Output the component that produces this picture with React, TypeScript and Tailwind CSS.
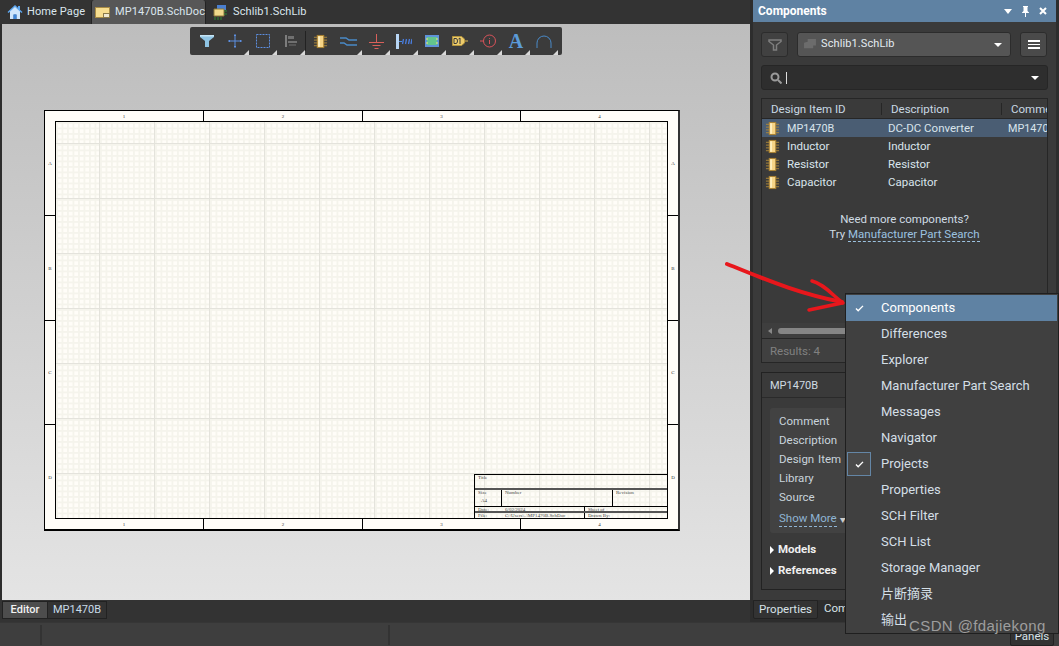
const font = "font-['Roboto','Noto_Sans_CJK_SC',sans-serif]";

function Chip({ s = 16 }: { s?: number }) {
  return (
    <svg width={s} height={s} viewBox="0 0 16 16" className="shrink-0">
      <g stroke="#b08a3a" strokeWidth="1">
        {[3.5, 6.5, 9.5, 12.5].map((y) => (
          <path key={y} d={`M1 ${y}H15`} />
        ))}
      </g>
      <rect x="4.5" y="1.5" width="7" height="13" fill="#f6d486" stroke="#a87f2e" />
      <rect x="5.5" y="2.5" width="2" height="11" fill="#fdeebf" />
    </svg>
  );
}

function Corner() {
  return <span className="absolute right-0 bottom-0 w-0 h-0 border-l-[5px] border-l-transparent border-b-[5px] border-b-[#d8d8d8]" />;
}

function ToolBtn({ children, corner = true }: { children: React.ReactNode; corner?: boolean }) {
  return (
    <div className="relative w-[28px] h-[28px] flex items-center justify-center shrink-0">
      {children}
      {corner && <Corner />}
    </div>
  );
}

function Toolbar() {
  return (
    <div className="flex items-center w-[372px] h-[28px] bg-[#3b3b3b] rounded-[2px] pl-[3px] shrink-0">
      <ToolBtn corner={false}>
        <svg width="14" height="12" viewBox="0 0 14 12"><path d="M0 0h14v2L9 6v6H5V6L0 2z" fill="#8fc4e4" /><path d="M0 0h14v1.500H0z" fill="#c5e4f5" /></svg>
      </ToolBtn>
      <ToolBtn>
        <svg width="14" height="14" viewBox="0 0 14 14" stroke="#5d8fe0" fill="none"><path d="M7 0v14M0 7h14M6 1.500h2M6 12.500h2M1.500 6v2M12.500 6v2" /></svg>
      </ToolBtn>
      <ToolBtn>
        <svg width="14" height="14" viewBox="0 0 14 14"><rect x="0.500" y="0.500" width="13" height="13" fill="none" stroke="#5d8fe0" strokeDasharray="2 1" /></svg>
      </ToolBtn>
      <ToolBtn>
        <svg width="12" height="12" viewBox="0 0 12 12"><path d="M0 0h2v12H0z" fill="#7d7d7d" /><path d="M3 1h6v3H3zM3 6h9v2H3z" fill="#707070" /><path d="M4 10h7" stroke="#707070" /></svg>
      </ToolBtn>
      <div className="w-px h-[20px] bg-[#222] shrink-0" />
      <ToolBtn corner={false}><Chip s={15} /></ToolBtn>
      <ToolBtn>
        <svg width="17" height="10" viewBox="0 0 17 10" fill="none" stroke="#4a8ac8" strokeWidth="1.500"><path d="M0 2h6l3 2h8M0 7h4l3 2h10" /></svg>
      </ToolBtn>
      <ToolBtn>
        <svg width="15" height="15" viewBox="0 0 15 15" stroke="#d8605a" fill="none"><path d="M7.500 0v8M0 8.500h15M3.500 11.500h8M5.500 14.500h4" /></svg>
      </ToolBtn>
      <ToolBtn>
        <svg width="16" height="15" viewBox="0 0 16 15"><rect x="0" y="0" width="3" height="15" fill="#b8d6f5" /><path d="M3 7.500h3" stroke="#4a8ae0" /><path d="M7.500 5l-1 5M10.500 5l-1 5M13.500 5l-1 5M16 5l-1 5" stroke="#4a7ee0" strokeWidth="1.300" fill="none" /></svg>
      </ToolBtn>
      <ToolBtn>
        <svg width="14" height="12" viewBox="0 0 14 12"><rect x="0" y="0" width="14" height="12" fill="#5f93d8" /><rect x="2" y="2" width="10" height="8" fill="#63c48e" /><path d="M1 4h2M1 8h2M11 4h2M11 8h2" stroke="#f4ea78" /></svg>
      </ToolBtn>
      <ToolBtn>
        <svg width="16" height="10" viewBox="0 0 16 10"><path d="M0.500 0.500h9l3 2.500v4l-3 2.500h-9z" fill="#eccb6b" stroke="#b4943c" /><path d="M12.500 5H16" stroke="#d8b552" /><path d="M2 2.500h2a1.500 2.500 0 0 1 0 5H2zM6.500 3 8 2v6" fill="none" stroke="#3b3b3b" /></svg>
      </ToolBtn>
      <ToolBtn>
        <svg width="16" height="14" viewBox="0 0 16 14" stroke="#d9535a" fill="none"><circle cx="9.500" cy="7" r="6" /><path d="M0 7h3.500M9.500 4v.800M9.500 6v4" /></svg>
      </ToolBtn>
      <ToolBtn>
        <span className="text-[#5b9bd8] text-[20px] leading-none font-['Liberation_Serif',serif] font-bold">A</span>
      </ToolBtn>
      <ToolBtn>
        <svg width="16" height="13" viewBox="0 0 16 13" fill="none" stroke="#4a8ac8"><path d="M1 13V8a7 7 0 0 1 14 0v5" /></svg>
      </ToolBtn>
    </div>
  );
}

function Ruler() {
  return (
    <div className="col-span-3 grid grid-cols-[159px_159px_158px_1fr] h-[10px]">
      {["1", "2", "3", "4"].map((n, i) => (
        <div key={n} className={`flex items-center justify-center text-[5px] leading-none text-[#333] font-['Liberation_Serif',serif] ${i < 3 ? "border-r border-r-black" : ""}`}>{n}</div>
      ))}
    </div>
  );
}

function Side() {
  const extra = ["pb-[10px]", "", "", "pt-[10px]"];
  return (
    <div className="grid grid-rows-[95px_105px_104px_1fr] h-full">
      {["A", "B", "C", "D"].map((n, i) => (
        <div key={n} className={`flex items-center justify-center text-[5px] leading-none text-[#333] font-['Liberation_Serif',serif] ${extra[i]} ${i < 3 ? "border-b border-b-black" : ""}`}>{n}</div>
      ))}
    </div>
  );
}

function TitleBlock() {
  const c = "font-['Liberation_Serif',serif] text-[5px] leading-[5px] text-[#444] pl-[3px]";
  return (
    <div className="w-[193px] h-[44px] border-t border-l border-black flex flex-col">
      <div className={`h-[15px] border-b-2 border-b-[#555] ${c}`}>Title</div>
      <div className="h-[18px] flex border-b border-b-black">
        <div className={`w-[27px] border-r border-r-black flex flex-col ${c}`}><span>Size</span><span className="pl-[3px] pt-[3px]">A4</span></div>
        <div className={`w-[111px] border-r border-r-black ${c}`}>Number</div>
        <div className={`flex-1 ${c}`}>Revision</div>
      </div>
      <div className="h-[6px] flex border-b-2 border-b-[#555]">
        <div className={`w-[27px] ${c}`}>Date:</div>
        <div className={`w-[83px] border-r border-r-black ${c}`}>6/02/2024</div>
        <div className={`flex-1 ${c}`}>Sheet of</div>
      </div>
      <div className="flex-1 flex">
        <div className={`w-[27px] ${c}`}>File:</div>
        <div className={`w-[83px] border-r border-r-black whitespace-nowrap overflow-hidden ${c}`}>C:\Users\..\MP1470B.SchDoc</div>
        <div className={`flex-1 ${c}`}>Drawn By:</div>
      </div>
    </div>
  );
}

function Sheet() {
  return (
    <div className="ml-[42px] mt-[55px] w-[636px] h-[421px] bg-[#fffdf8] border border-black border-r-2 border-b-2 border-r-[#333] shrink-0 grid grid-cols-[10px_1fr_10px] grid-rows-[10px_1fr_10px]">
      <Ruler />
      <Side />
      <div className="border border-black flex items-end justify-end bg-[#fffdf8] bg-[linear-gradient(to_right,#e4e3dc_1px,transparent_1px),linear-gradient(to_bottom,#e4e3dc_1px,transparent_1px),linear-gradient(to_right,#f5f4ec_2px,transparent_2px),linear-gradient(to_bottom,#f5f4ec_2px,transparent_2px)] bg-[size:55px_55px,55px_55px,5.500px_5.500px,5.500px_5.500px] bg-[position:43px_21px,43px_21px,0px_0px,0px_0px]">
        <TitleBlock />
      </div>
      <Side />
      <Ruler />
    </div>
  );
}

function Tab({ active, icon, label, cls }: { active?: boolean; icon: React.ReactNode; label: string; cls: string }) {
  return (
    <div className={`h-[24px] flex items-center ${cls} ${active ? "bg-[#575757] rounded-t-[3px] border-x border-x-[#222]" : ""}`}>
      {icon}
      <span className="text-[11px] tracking-[0.1px] text-[#dbe6ee] whitespace-nowrap">{label}</span>
    </div>
  );
}

function TopTabs() {
  return (
    <div className="h-[24px] bg-[#333333] flex pl-[2px] shrink-0">
      <Tab cls="w-[89px] pl-[5px] gap-[4px]" label="Home Page" icon={
        <svg width="16" height="16" viewBox="0 0 16 16" className="shrink-0"><path d="M8 1 0.500 8l1 1L3 7.800V15h3.500v-4.500h3V15H13V7.800L14.500 9l1-1L13 5.700V2h-2v1.800z" fill="#5ea6ee" /><path d="M8 3 3 7.500V15h3.500v-4.500h3V15H13V7.500z" fill="#cfe6fb" /><rect x="6.500" y="10.500" width="3" height="4.500" fill="#3f86d8" /></svg>
      } />
      <Tab active cls="w-[115px] pl-[3px] gap-[5px]" label="MP1470B.SchDoc" icon={
        <svg width="15" height="11" viewBox="0 0 15 11" className="shrink-0"><rect x="0.500" y="0.500" width="14" height="10" fill="#f7de90" stroke="#a88b45" /><rect x="8.500" y="6.500" width="6" height="4" fill="#efe9d2" stroke="#8a7a4a" /></svg>
      } />
      <Tab cls="w-[110px] pl-[6px] gap-[5px]" label="Schlib1.SchLib" icon={
        <svg width="16" height="17" viewBox="0 0 16 17" className="shrink-0"><path d="M5 1h9v5H5z" fill="#4a7fd0" /><path d="M2 5h10v7H2z" fill="#efd98c" stroke="#8f7a3a" /><path d="M3 13v3M6 13v3M9 13v3M12 10h3M12 7h3" stroke="#2f8a35" /></svg>
      } />
    </div>
  );
}

function BottomTabs() {
  return (
    <div className="h-[22px] bg-[#333333] shrink-0 flex items-start pt-px">
      <div className="ml-[2px] h-[18px] flex border border-[#222] text-[11px] leading-[16px]">
        <div className="w-[44px] text-center bg-[#4d4d4d] font-medium text-[#f2f2f2]">Editor</div>
        <div className="w-[59px] text-center border-l border-l-[#222] bg-[#333] text-[#c8dbe8]">MP1470B</div>
      </div>
    </div>
  );
}

function PropertyPanel() {
  return (
    <div className="mt-[9px] mx-[8px] w-[287px] h-[218px] border border-[#222] shrink-0 flex flex-col">
      <div className="h-[25px] border-b border-b-[#2a2a2a] px-[8px] pt-[2px] flex items-center text-[11px] text-[#d0dbe2]">MP1470B</div>
      <div className="mt-[10px] ml-[8px] mr-[8px] h-[125px] bg-[#424242] rounded-[3px] pl-[9px] text-[11.500px] text-[#c9d4dc] flex flex-col">
        {["Comment", "Description", "Design Item ID", "Library", "Source"].map((t, i) => (
          <div key={t} className={`h-[19px] leading-[19px] whitespace-nowrap [word-spacing:1px] ${i === 0 ? "mt-[4px]" : ""}`}>{t}</div>
        ))}
        <div className="mt-[4px] flex items-center gap-[3px] text-[#8fb4d4]">
          <span className="border-b border-dashed border-b-[#8fb4d4] leading-[15px]">Show More</span>
          <span className="text-[6px] text-[#cccccc]">▼</span>
        </div>
      </div>
      <div className="mt-[6px] ml-[8px] text-[11.500px] font-bold text-[#f0f0f0] flex flex-col">
        {["Models", "References"].map((t) => (
          <div key={t} className="h-[21px] flex items-center gap-[4px]">
            <span className="w-0 h-0 border-y-[4px] border-y-transparent border-l-[4px] border-l-white" />
            {t}
          </div>
        ))}
      </div>
    </div>
  );
}

function RightPanel() {
  const rows = [
    ["MP1470B", "DC-DC Converter", "MP1470"],
    ["Inductor", "Inductor", ""],
    ["Resistor", "Resistor", ""],
    ["Capacitor", "Capacitor", ""],
  ];
  return (
    <div className="w-[309px] h-full bg-[#2d2d2d] flex flex-col pl-[3px] pr-[3px]">
      <div className="h-[600px] bg-[#3a3a3a] flex flex-col shrink-0">
        <div className="h-[22px] bg-[#5f82a3] flex items-center pl-[5px] pr-[9px] shrink-0">
          <span className="text-[12px] font-bold text-white flex-1">Components</span>
          <div className="flex items-center gap-[9px] text-white">
            <span className="w-0 h-0 border-x-[4px] border-x-transparent border-t-[5px] border-t-white" />
            <svg width="9" height="11" viewBox="0 0 9 11" fill="#fff"><path d="M2 0h5v1H6.500v4L8 6.500V7H5v4H4V7H1v-.500L2.500 5V1H2z" /></svg>
            <svg width="8" height="8" viewBox="0 0 8 8" stroke="#fff" strokeWidth="2"><path d="M1 1l6 6M7 1 1 7" /></svg>
          </div>
        </div>
        <div className="mt-[10px] mx-[8px] flex gap-[9px] h-[25px] shrink-0">
          <div className="w-[27px] bg-[#414141] border border-[#2c2c2c] rounded-[3px] flex items-center justify-center">
            <svg width="14" height="14" viewBox="0 0 14 14" fill="none" stroke="#7f7f7f" strokeWidth="1.500"><path d="M1 2h12v1.500L8.500 7v5h-3V7L1 3.500z" /></svg>
          </div>
          <div className="w-[214px] bg-[#555555] border border-[#2c2c2c] rounded-[3px] flex items-center pl-[5px] pr-[8px]">
            <svg width="14" height="11" viewBox="0 0 15 12" fill="#6c6c6c" className="shrink-0"><path d="M5 0h9v7h-3v3H1V4l4-1z" /></svg>
            <span className="ml-[4px] flex-1 text-[11px] tracking-[0.1px] text-[#e4ecf1]">Schlib1.SchLib</span>
            <span className="w-0 h-0 border-x-[4px] border-x-transparent border-t-[4px] border-t-white" />
          </div>
          <div className="w-[27px] bg-[#4a4a4a] border border-[#2c2c2c] rounded-[3px] flex flex-col items-center justify-center gap-[2px]">
            <span className="w-[12px] h-[1.500px] bg-white" />
            <span className="w-[12px] h-[1.500px] bg-white" />
            <span className="w-[12px] h-[1.500px] bg-white" />
          </div>
        </div>
        <div className="mt-[8px] mx-[8px] h-[25px] bg-[#2e2e2e] border border-[#262626] rounded-[3px] flex items-center pl-[8px] pr-[8px] shrink-0">
          <svg width="12" height="12" viewBox="0 0 12 12" fill="none" stroke="#9a9a9a" strokeWidth="2"><circle cx="5" cy="5" r="3.500" /><path d="M8 8l3.500 3.500" /></svg>
          <span className="ml-[4px] w-px h-[12px] bg-[#dddddd]" />
          <span className="ml-auto w-0 h-0 border-x-[4px] border-x-transparent border-t-[4px] border-t-white" />
        </div>
        <div className="mt-[8px] mx-[8px] h-[265px] border border-[#262626] shrink-0 flex flex-col overflow-hidden">
          <div className="h-[20px] flex items-center border-b border-b-[#262626] text-[11.500px] text-[#c9d8e3] shrink-0 whitespace-nowrap">
            <span className="w-[120px] pl-[9px] border-r border-r-[#262626] h-[12px] leading-[12px] shrink-0">Design Item ID</span>
            <span className="w-[120px] pl-[9px] border-r border-r-[#262626] h-[12px] leading-[12px] shrink-0">Description</span>
            <span className="pl-[9px] leading-[12px]">Comment</span>
          </div>
          {rows.map((r, i) => (
            <div key={r[0]} className={`h-[18px] flex items-center text-[11.500px] text-[#d9e4ec] shrink-0 whitespace-nowrap ${i === 0 ? "bg-[#4a5d73]" : ""}`}>
              <span className="w-[25px] pl-[3px] shrink-0"><Chip s={15} /></span>
              <span className={`w-[101px] shrink-0 pt-[2px] ${i === 0 ? "text-[10.800px]" : ""}`}>{r[0]}</span>
              <span className="w-[120px] shrink-0 pt-[2px]">{r[1]}</span>
              <span className="text-[10.800px] pt-[2px]">{r[2]}</span>
            </div>
          ))}
          <div className="flex-1 flex flex-col items-center pt-[21px] text-[11.500px] leading-[15px] text-[#cfdbe3]">
            <span>Need more components?</span>
            <span>Try <span className="text-[#9cc2e0] border-b border-dashed border-b-[#9cc2e0]">Manufacturer Part Search</span></span>
          </div>
          <div className="h-[15px] bg-[#3e3e3e] flex items-center pl-[6px] gap-[6px] shrink-0">
            <span className="w-0 h-0 border-y-[3px] border-y-transparent border-r-[4px] border-r-[#888]" />
            <span className="w-[100px] h-[6px] rounded-full bg-[#858585]" />
          </div>
          <div className="h-[24px] border-t border-t-[#262626] bg-[#404040] pl-[8px] pt-[2px] flex items-center text-[11.500px] text-[#808080] shrink-0">Results: 4</div>
        </div>
        <PropertyPanel />
      </div>
      <div className="flex h-[22px] text-[11.500px] text-[#d8e2e8]">
        <div className="h-[19px] w-[65px] text-center leading-[17px] bg-[#333] border border-[#222] rounded-b-[2px]">Properties</div>
        <div className="h-[19px] pl-[5px] leading-[17px] ml-[1px]">Components</div>
      </div>
    </div>
  );
}

function Menu() {
  const items = ["Components", "Differences", "Explorer", "Manufacturer Part Search", "Messages", "Navigator", "Projects", "Properties", "SCH Filter", "SCH List", "Storage Manager", "片断摘录", "输出"];
  return (
    <div className="absolute left-[845px] top-[293px] w-[214px] h-[341px] bg-[#404040] border border-[#1f1f1f] pt-px pr-px text-[13px] text-[#d4dfe6]">
      {items.map((t, i) => (
        <div key={t} className={`h-[26px] flex items-center ${i === 0 ? "bg-[#5f82a3] text-white" : ""}`}>
          <span className={`w-[24px] h-[24px] ml-[1px] flex items-center justify-center shrink-0 ${i === 6 ? "bg-[#4a4a4a] border border-[#6486a6]" : ""}`}>
            {(i === 0 || i === 6) && (
              <svg width="9" height="7" viewBox="0 0 10 8" fill="none" stroke="#fff" strokeWidth="1.600"><path d="M1 4l2.500 2.500L9 1" /></svg>
            )}
          </span>
          <span className="ml-[10px] whitespace-nowrap">{t}</span>
        </div>
      ))}
    </div>
  );
}

export default function App() {
  return (
    <div className={`relative w-[1059px] h-[646px] overflow-hidden bg-[#2d2d2d] flex flex-col ${font}`}>
      <div className="flex h-[622px] shrink-0">
        <div className="w-[750px] flex flex-col shrink-0">
          <TopTabs />
          <div className="h-[576px] ml-[2px] bg-linear-to-b from-[#bdbdbd] to-[#e4e4e4] flex flex-col items-start pt-[3px] shrink-0">
            <div className="w-full flex justify-center"><Toolbar /></div>
            <Sheet />
          </div>
          <BottomTabs />
        </div>
        <RightPanel />
      </div>
      <div className="h-[24px] bg-[#3e3e3e] border-t border-t-[#363636] flex items-center relative">
        <span className="ml-[40px] w-[2px] h-[20px] bg-[#333]" />
        <span className="ml-[346px] w-[2px] h-[20px] bg-[#333]" />
        <span className="ml-auto mr-[5px] mt-[5px] h-[18px] w-[44px] text-center text-[11.500px] leading-[15px] text-[#d8e2e8] bg-[#333] border border-[#222] rounded-[2px]">Panels</span>
      </div>
      <Menu />
      <svg className="absolute left-[720px] top-[255px]" width="130" height="60" viewBox="0 0 130 60" fill="none" stroke="#e8171c" strokeLinecap="round" strokeLinejoin="round">
        <path d="M7 9C40 22 75 38 122 47" strokeWidth="4" />
        <path d="M92 26C104 29 112 40 123 48" strokeWidth="3.500" />
        <path d="M89 55L122 48" strokeWidth="3.500" />
      </svg>
      <span className="absolute left-[909px] top-[616px] text-[15px] leading-[20px] text-[#a8a8a8] font-['Liberation_Sans',sans-serif] opacity-90 tracking-[0.4px]">CSDN @fdajiekong</span>
    </div>
  );
}
